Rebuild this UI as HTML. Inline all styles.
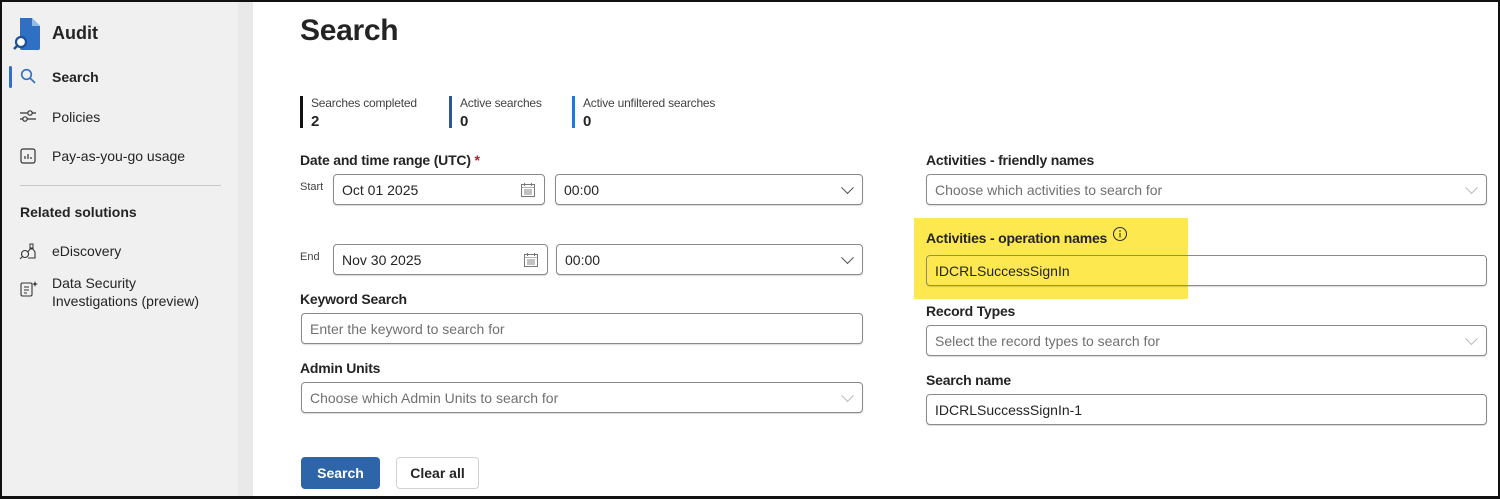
<!DOCTYPE html>
<html><head><meta charset="utf-8"><style>
*{box-sizing:border-box;margin:0;padding:0}
body{width:1500px;height:499px;overflow:hidden;background:#fff;font-family:"Liberation Sans",sans-serif;color:#242424;position:relative}
.a{position:absolute}
.frame{left:0;top:0;width:1500px;height:499px;border:2px solid #111;border-bottom-width:3px;z-index:10;pointer-events:none}
.side{left:0;top:0;width:238px;height:499px;background:#f0f0f0}
.strip{left:238px;top:0;width:15px;height:499px;background:#e9e9e9}
.nav{font-size:14px;color:#242424}
.inp{border:1px solid #8a8a8a;border-radius:4px;background:#fff;font-size:14px;padding-left:8px;display:flex;align-items:center;box-shadow:0 1px 1px rgba(0,0,0,.15)}
.ph{color:#707070}
.lbl{font-size:14px;font-weight:bold;color:#242424;letter-spacing:-.2px}
.chev{position:absolute;right:10px;top:50%;width:9px;height:9px;border-right:1.3px solid #555;border-bottom:1.3px solid #555;transform:translateY(-75%) rotate(45deg)}
.chev.l{border-color:#bbb}
.stat{border-left:3px solid #111;padding-left:8px;height:32px}
.stat .t{font-size:12px;color:#424242;line-height:14px;letter-spacing:-.2px}
.stat .v{font-size:15px;font-weight:bold;line-height:18px;margin-top:3px}
</style></head><body>
<div class="a side"></div><div class="a strip"></div>

<svg class="a" style="left:13px;top:17px" width="28" height="34" viewBox="0 0 28 34"><path d="M7 1h12l8 8v22a2 2 0 0 1-2 2H9a2 2 0 0 1-2-2z" fill="#2f6fc4"/><path d="M19 1v8h8z" fill="#8fbde8"/><circle cx="8" cy="25" r="5" fill="#fff" stroke="#1d4f95" stroke-width="2.2"/><path d="M4.5 28.5l-3.5 3.5" stroke="#1d4f95" stroke-width="2.4"/></svg>
<div class="a" style="left:52px;top:23px;font-size:18px;font-weight:bold">Audit</div>

<div class="a" style="left:9px;top:66px;width:3px;height:22px;background:#2f6fc4;border-radius:2px"></div>
<svg class="a" style="left:20px;top:68px" width="16" height="16" viewBox="0 0 16 16"><circle cx="6.5" cy="6.5" r="4.8" fill="none" stroke="#2f6fc4" stroke-width="1.6"/><path d="M10 10l5 5" stroke="#2f6fc4" stroke-width="1.6"/></svg>
<div class="a nav" style="left:52px;top:69px;font-weight:bold">Search</div>

<svg class="a" style="left:19px;top:109px" width="18" height="14" viewBox="0 0 18 14"><path d="M1 4h16M1 10h16" stroke="#333" stroke-width="1.2"/><circle cx="11" cy="4" r="2.2" fill="#f0f0f0" stroke="#333" stroke-width="1.2"/><circle cx="6" cy="10" r="2.2" fill="#f0f0f0" stroke="#333" stroke-width="1.2"/></svg>
<div class="a nav" style="left:52px;top:109px">Policies</div>

<svg class="a" style="left:20px;top:148px" width="16" height="16" viewBox="0 0 16 16"><rect x="1" y="1" width="14" height="14" rx="2" fill="none" stroke="#333" stroke-width="1.2"/><path d="M5 11V8M8 11V6M11 11V9" stroke="#333" stroke-width="1.2"/></svg>
<div class="a nav" style="left:52px;top:148px">Pay-as-you-go usage</div>

<div class="a" style="left:20px;top:185px;width:201px;height:1px;background:#c8c8c8"></div>
<div class="a nav" style="left:20px;top:204px;font-weight:bold">Related solutions</div>

<svg class="a" style="left:19px;top:242px" width="18" height="18" viewBox="0 0 18 18"><circle cx="6" cy="12" r="3.5" fill="none" stroke="#333" stroke-width="1.1"/><path d="M3.5 14.5L1 17" stroke="#333" stroke-width="1.1"/><path d="M9 16h7v-6l-2-3h-3l-2 3" fill="none" stroke="#333" stroke-width="1.1"/><rect x="11" y="2" width="3" height="4" fill="none" stroke="#333" stroke-width="1"/></svg>
<div class="a nav" style="left:52px;top:243px">eDiscovery</div>

<svg class="a" style="left:20px;top:280px" width="18" height="18" viewBox="0 0 18 18"><rect x="1" y="3" width="11" height="13" rx="1.5" fill="none" stroke="#333" stroke-width="1.1"/><path d="M4 7h5M4 10h5M4 13h3" stroke="#333" stroke-width="1.1"/><path d="M15 1l.8 2.2L18 4l-2.2.8L15 7l-.8-2.2L12 4l2.2-.8z" fill="#333"/></svg>
<div class="a nav" style="left:52px;top:274px;line-height:18px">Data Security<br>Investigations (preview)</div>

<div class="a" style="left:300px;top:14px;font-size:30px;font-weight:bold;letter-spacing:-.3px">Search</div>

<div class="a stat" style="left:300px;top:96px"><div class="t">Searches completed</div><div class="v">2</div></div>
<div class="a stat" style="left:449px;top:96px;border-color:#2c5a8f"><div class="t">Active searches</div><div class="v">0</div></div>
<div class="a stat" style="left:572px;top:96px;border-color:#1f7ae0"><div class="t">Active unfiltered searches</div><div class="v">0</div></div>

<div class="a lbl" style="left:300px;top:152px">Date and time range (UTC) <span style="color:#a4262c">*</span></div>
<div class="a" style="left:300px;top:181px;font-size:11px;color:#424242">Start</div>
<div class="a inp" style="left:333px;top:174px;width:212px;height:31px">Oct 01 2025
<svg class="a" style="right:8px;top:7px" width="16" height="16" viewBox="0 0 16 16"><rect x="1.5" y="2.5" width="13" height="12" fill="none" stroke="#777"/><path d="M1.5 5.5h13M4 8h8M4 10h8M4 12h8M5 7v6M7 7v6M9 7v6M11 7v6" stroke="#999" stroke-width=".7"/><path d="M4.5 1v3M11.5 1v3" stroke="#777"/></svg></div>
<div class="a inp" style="left:555px;top:174px;width:308px;height:31px">00:00<span class="chev"></span></div>

<div class="a" style="left:300px;top:251px;font-size:11px;color:#424242">End</div>
<div class="a inp" style="left:333px;top:244px;width:215px;height:31px">Nov 30 2025
<svg class="a" style="right:8px;top:7px" width="16" height="16" viewBox="0 0 16 16"><rect x="1.5" y="2.5" width="13" height="12" fill="none" stroke="#777"/><path d="M1.5 5.5h13M4 8h8M4 10h8M4 12h8M5 7v6M7 7v6M9 7v6M11 7v6" stroke="#999" stroke-width=".7"/><path d="M4.5 1v3M11.5 1v3" stroke="#777"/></svg></div>
<div class="a inp" style="left:556px;top:244px;width:307px;height:31px">00:00<span class="chev"></span></div>

<div class="a lbl" style="left:300px;top:291px">Keyword Search</div>
<div class="a inp" style="left:301px;top:313px;width:562px;height:31px"><span class="ph">Enter the keyword to search for</span></div>

<div class="a lbl" style="left:300px;top:360px">Admin Units</div>
<div class="a inp" style="left:301px;top:382px;width:562px;height:31px"><span class="ph">Choose which Admin Units to search for</span><span class="chev l"></span></div>

<div class="a" style="left:301px;top:457px;width:79px;height:32px;background:#2e64a8;border-radius:4px;color:#fff;font-size:14px;font-weight:bold;display:flex;align-items:center;justify-content:center">Search</div>
<div class="a" style="left:396px;top:457px;width:83px;height:32px;background:#fff;border:1px solid #d1d1d1;border-radius:4px;font-size:14px;font-weight:bold;display:flex;align-items:center;justify-content:center">Clear all</div>

<div class="a lbl" style="left:926px;top:152px">Activities - friendly names</div>
<div class="a inp" style="left:926px;top:174px;width:561px;height:31px"><span class="ph">Choose which activities to search for</span><span class="chev l"></span></div>

<div class="a" style="left:914px;top:218px;width:274px;height:81px;background:#fde94f"></div>
<div class="a lbl" style="left:926px;top:230px">Activities - operation names</div>
<svg class="a" style="left:1112px;top:226px" width="16" height="16" viewBox="0 0 16 16"><circle cx="8" cy="8" r="6.5" fill="none" stroke="#333" stroke-width="1.1"/><path d="M8 7v4.5" stroke="#333" stroke-width="1.1"/><circle cx="8" cy="5" r=".8" fill="#333"/></svg>
<div class="a inp" style="left:926px;top:255px;width:561px;height:31px;background:transparent">IDCRLSuccessSignIn</div>
<div class="a" style="left:1188px;top:256px;width:298px;height:29px;background:#fff;border-radius:0 3px 3px 0"></div>

<div class="a lbl" style="left:926px;top:303px">Record Types</div>
<div class="a inp" style="left:926px;top:325px;width:561px;height:31px"><span class="ph">Select the record types to search for</span><span class="chev l"></span></div>

<div class="a lbl" style="left:926px;top:372px">Search name</div>
<div class="a inp" style="left:926px;top:394px;width:561px;height:31px">IDCRLSuccessSignIn-1</div>

<div class="a frame"></div>
</body></html>
